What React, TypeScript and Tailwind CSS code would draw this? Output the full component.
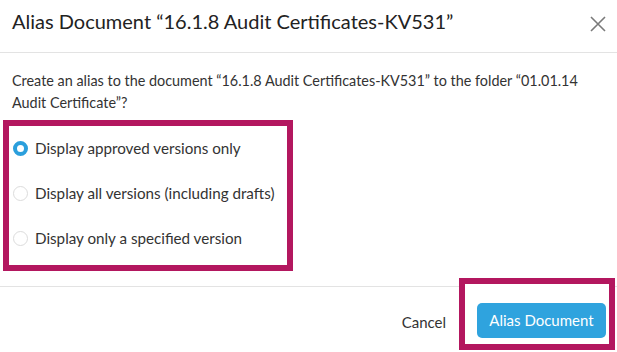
import React from "react";

function Radio({ checked }: { checked?: boolean }) {
  return checked ? (
    <span className="inline-block w-[15px] h-[15px] rounded-full border-[4px] border-[#2b9fdc] bg-white shrink-0" />
  ) : (
    <span className="inline-block w-[15px] h-[15px] rounded-full border border-[#dcdcdc] bg-white shrink-0" />
  );
}

export default function App() {
  const opts = [
    { label: "Display approved versions only", checked: true },
    { label: "Display all versions (including drafts)" },
    { label: "Display only a specified version" },
  ];
  return (
    <div className="w-[617px] h-[352px] bg-white text-[#333] overflow-hidden" style={{ fontFamily: "Lato, 'Noto Sans', sans-serif" }}>
      <div className="h-[53px] border-b border-[#e3e3e3] flex items-center justify-between pl-[12px] pr-[10px]">
        <div className="text-[20px] text-[#222] -mt-[10px]">Alias Document “16.1.8 Audit Certificates-KV531”</div>
        <svg width="18" height="18" viewBox="0 0 18 18" className="-mt-[5px]">
          <path d="M2 2 L16 16 M16 2 L2 16" stroke="#7a7a7a" strokeWidth="1.6" />
        </svg>
      </div>
      <div className="pt-[17px] px-[12px] text-[14.4px] leading-[22px]">
        Create an alias to the document “16.1.8 Audit Certificates-KV531” to the folder “01.01.14 Audit Certificate”?
      </div>
      <div className="ml-[3px] mt-[6px] w-[290px] h-[151px] border-[6px] border-[#b3175f] flex flex-col pt-[11px] gap-[23px]">
        {opts.map((o) => (
          <label key={o.label} className="flex items-center gap-[7px] pl-[4px] text-[15.2px] leading-[22px]">
            <Radio checked={o.checked} />
            <span>{o.label}</span>
          </label>
        ))}
      </div>
      <div className="mt-[15px] border-t border-[#e3e3e3] flex justify-end items-start pr-[2px]">
        <div className="flex items-center mt-[-9px]">
          <span className="text-[15px] mr-[13px] mt-[16px]">Cancel</span>
          <div className="w-[156px] h-[72px] border-[6px] border-[#b3175f] bg-white flex items-end justify-end pr-[3px] pb-[6px]">
            <button className="w-[129px] h-[35px] rounded-[5px] bg-[#2fa3de] text-white text-[15px]">Alias Document</button>
          </div>
        </div>
      </div>
    </div>
  );
}
